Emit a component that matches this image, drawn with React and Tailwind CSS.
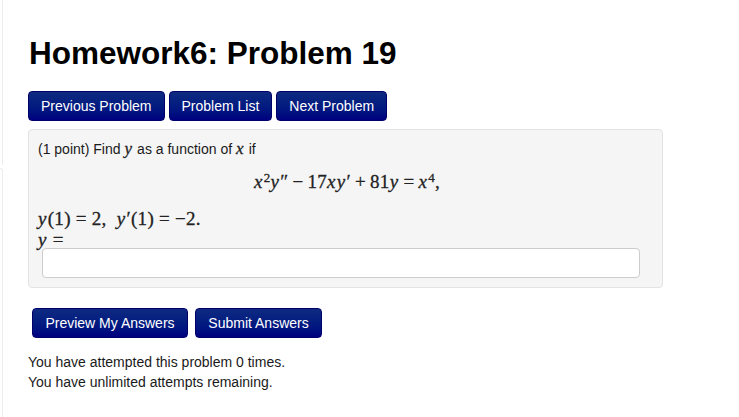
import React from "react";

function NavButton({ children, className = "" }) {
  return (
    <a className={`inline-block h-[30px] rounded-[4px] border border-[#00006a] bg-gradient-to-b from-[#0f2a80] to-[#000080] px-3 text-center text-[14px] leading-[28px] text-white ${className}`}>
      {children}
    </a>
  );
}

function M({ children, className = "text-[19px]" }) {
  return <span className={`font-['Liberation_Serif',serif] leading-none tracking-[0.3px] text-[#222] [-webkit-text-stroke:0.3px_#222] ${className}`}>{children}</span>;
}
const V = ({ children }) => <i className="pr-[1px]">{children}</i>;
const Op = ({ children, className = "mx-[5px]" }) => <span className={className}>{children}</span>;

export default function App() {
  return (
    <div className="flex min-h-[417px] bg-white font-['Liberation_Sans',Arial,sans-serif] text-[#1a1a1a]">
      {/* left page edge, two boxes meeting at y=167 */}
      <div className="flex w-[3px] flex-col gap-[3px]">
        <div className="h-[165px] border-r border-[#ececec]" />
        <div className="flex-1 rounded-tr-[4px] border-r border-t border-[#ececec]" />
      </div>
      <div className="ml-[25px] w-[635px] shrink-0">
        <h1 className="mt-[33px] pl-px text-[31.5px] font-bold leading-[40px] text-black">Homework6: Problem 19</h1>
        <div className="mt-[18px] flex gap-[4px]">
          <NavButton>Previous Problem</NavButton>
          <NavButton>Problem List</NavButton>
          <NavButton>Next Problem</NavButton>
        </div>
        <div className="mt-[8px] h-[159px] rounded-[4px] border border-[#e3e3e3] bg-[#f5f5f5] pl-[9px] pr-[22px] pt-[9px]">
          <p className="h-[20px] text-[14px] leading-[20px]">
            (1 point) Find <M className="text-[17px]"><V>y</V></M> as a function of <M className="text-[17px]"><V>x</V></M> if
          </p>
          <div className="mt-[11px] h-[26px] pl-[16px] text-center leading-[26px]">
            <M>
              <V>x</V><sup className="text-[13px]">2</sup><V>y</V>″<Op className="mx-[4px]">−</Op>17<V>x</V><V>y</V>′<Op className="mx-[4px]">+</Op>81<V>y</V><Op className="mx-[4px]">=</Op><V>x</V><sup className="text-[13px]">4</sup>,
            </M>
          </div>
          <div className="mt-[13px] h-[21px] leading-[21px]">
            <M><V>y</V>(1)<Op>=</Op>2,&nbsp;&nbsp;<V>y</V>′(1)<Op>=</Op>−2.</M>
          </div>
          <div className="h-[15px] leading-[15px]"><M><V>y</V><Op>=</Op></M></div>
          <input className="ml-[4px] mt-[3px] block h-[30px] w-[598px] rounded-[4px] border border-[#ccc] bg-white" />
        </div>
        <div className="ml-[4px] mt-[20px] flex gap-[7px]">
          <NavButton className="w-[156px]">Preview My Answers</NavButton>
          <NavButton className="w-[127px]">Submit Answers</NavButton>
        </div>
        <p className="mt-[14px] text-[14px] leading-[20px]">You have attempted this problem 0 times.</p>
        <p className="text-[14px] leading-[20px]">You have unlimited attempts remaining.</p>
      </div>
    </div>
  );
}
